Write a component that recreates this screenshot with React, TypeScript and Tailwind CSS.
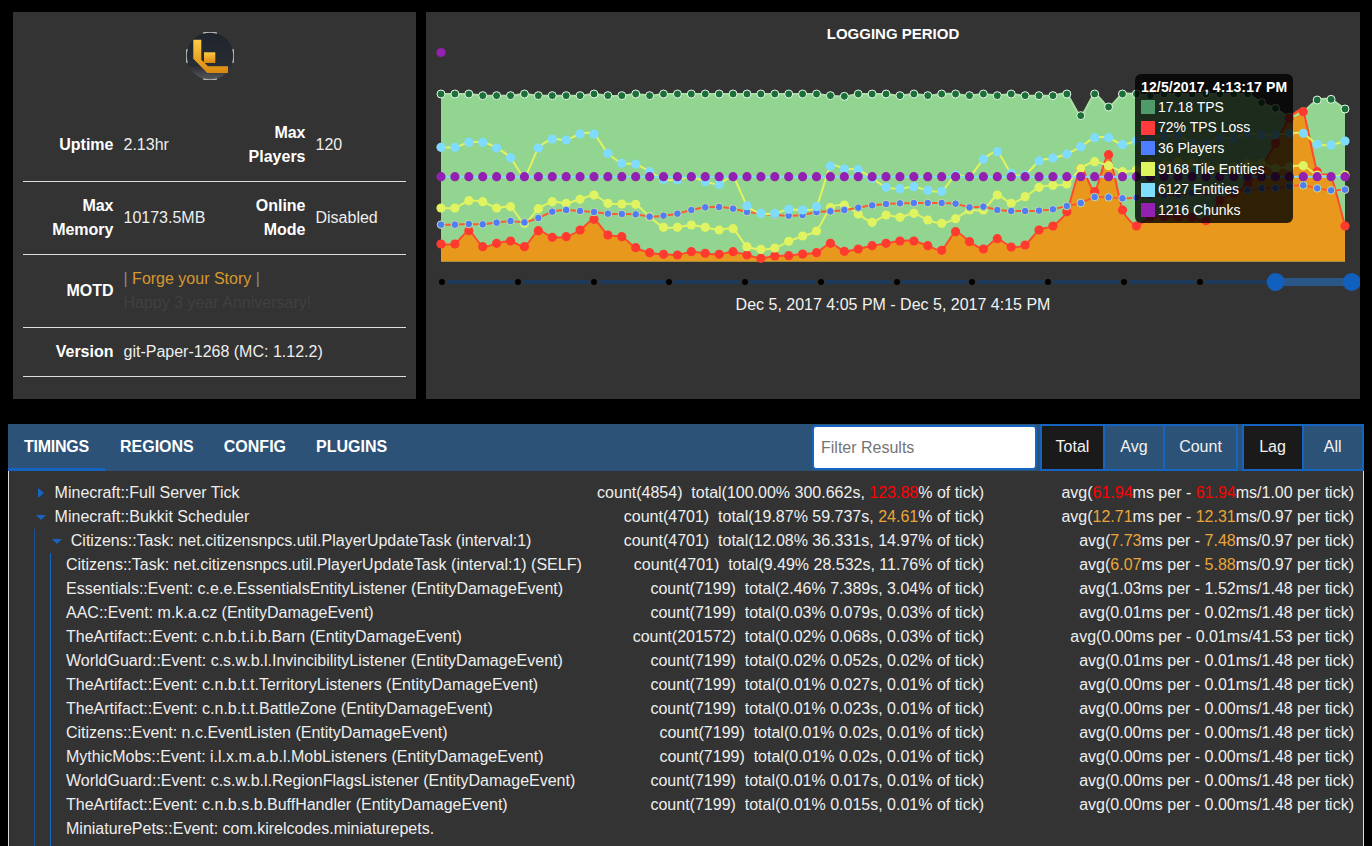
import React from "react";

const N = 66;
const xAt = (i: number) => 441 + (i * 904) / (N - 1);
const yOf = (z: number) => 20 + z / 3;

const tps = [222,222,222,227,227,227,222,227,227,227,227,222,227,227,222,227,222,222,222,222,222,222,222,222,222,222,222,222,227,229,222,222,222,227,222,227,222,222,227,222,227,222,227,227,227,222,287,222,261,222,222,227,222,222,222,222,222,222,222,248,265,292,275,240,238,267];
const loss = [672,672,632,680,670,663,680,632,652,650,630,598,645,650,683,698,703,705,695,700,703,695,705,715,708,707,702,698,670,694,687,677,670,663,663,677,691,635,665,687,656,681,675,630,618,575,445,515,404,570,618,590,590,590,592,602,540,520,495,440,370,295,275,455,470,618];
const players = [614,614,612,613,608,603,607,594,575,570,573,576,581,582,583,590,587,581,570,562,561,566,576,581,585,587,585,576,574,570,563,556,552,550,549,549,549,551,562,560,570,573,573,572,568,558,549,531,532,535,533,528,525,525,520,518,515,512,511,505,505,499,496,505,511,509];
const tiles = [564,564,542,545,564,560,610,566,545,550,538,525,550,552,553,590,622,622,615,622,630,626,680,688,684,664,648,633,563,555,582,607,585,592,580,600,610,596,570,570,525,550,530,502,496,492,445,425,437,455,450,430,435,425,430,435,445,440,430,430,445,440,437,465,470,465];
const entities = [382,382,367,367,384,413,470,384,357,360,342,342,400,430,432,455,478,480,470,485,493,470,557,580,580,568,570,560,438,447,449,475,502,506,500,511,514,465,470,418,395,460,465,423,414,402,380,353,353,374,362,350,350,345,370,372,355,355,340,344,344,340,340,373,375,363];
const chunks = Array.from({ length: N }, () => 470);

function linePath(z: number[]) {
  const p = z.map((v, i) => [xAt(i), yOf(v)]);
  const t = 0.1;
  let d = `M${p[0][0]} ${p[0][1]}`;
  for (let i = 0; i < p.length - 1; i++) {
    const a = p[Math.max(0, i - 1)];
    const b = p[i];
    const c = p[i + 1];
    const e = p[Math.min(p.length - 1, i + 2)];
    d += `C${b[0] + (c[0] - a[0]) * t} ${b[1] + (c[1] - a[1]) * t} ${c[0] - (e[0] - b[0]) * t} ${c[1] - (e[1] - b[1]) * t} ${c[0]} ${c[1]}`;
  }
  return d;
}
const areaPath = (z: number[]) => `${linePath(z)}L${xAt(N - 1)} 261.5L441 261.5Z`;

function Series({ z, line, dot, rim, r = 4.6 }: { z: number[]; line: string; dot: string; rim?: string; r?: number }) {
  return (
    <g>
      <path d={linePath(z)} fill="none" stroke={line} strokeWidth={2} />
      {z.map((v, i) => (
        <circle key={i} cx={xAt(i)} cy={yOf(v)} r={r} fill={dot} stroke={rim ?? "none"} strokeWidth={rim ? 1 : 0} />
      ))}
    </g>
  );
}

function Chart() {
  const dots = [442, 518, 594, 669, 745, 821, 897, 972, 1048, 1124, 1200];
  return (
    <svg viewBox="426 44 934 250" className="block h-[250px] w-[934px]">
      <path d={areaPath(tps)} fill="#92d590" />
      <path d={areaPath(loss)} fill="#e8991d" />
      <Series z={tps} line="#a8dfa4" dot="#1b6f38" rim="#eef7ec" r={4} />
      <Series z={loss} line="#ff4a2e" dot="#ff3b30" />
      <Series z={tiles} line="#e2f35f" dot="#e0f360" />
      <Series z={players} line="#ff5a30" dot="#4f7df5" rim="#c6dca0" r={3.8} />
      <Series z={entities} line="#e2f35f" dot="#7fdcff" />
      <Series z={chunks} line="#7fdcff" dot="#9320b0" />
      <circle cx={441} cy={52.5} r={4.6} fill="#9320b0" />
      {dots.map((x, i) => (
        <g key={x}>
          <circle cx={x} cy={282} r={3} fill="#000" />
          <rect x={x + 5} y={280} width={i === 10 ? 70 : 66} height={4} fill="#1d3a5a" />
        </g>
      ))}
      <rect x={1276} y={278} width={76} height={8} fill="#2b5688" />
      <circle cx={1275.7} cy={282} r={9} fill="#1260bd" />
      <circle cx={1351.7} cy={282} r={9} fill="#1260bd" />
    </svg>
  );
}

const legend = [
  ["#4f9a6a", "17.18 TPS"],
  ["#ff3b3b", "72% TPS Loss"],
  ["#4f7dff", "36 Players"],
  ["#dff55f", "9168 Tile Entities"],
  ["#7fdfff", "6127 Entities"],
  ["#9320b0", "1216 Chunks"],
];

function Tooltip() {
  return (
    <div className="absolute left-[709px] top-[62px] h-[149px] w-[158px] rounded-md bg-black/80 pl-[6px] pt-[3px] text-[14px] text-white">
      <div className="h-[20px] whitespace-nowrap text-[14px] font-bold leading-[20px] tracking-[0.15px]">12/5/2017, 4:13:17 PM</div>
      {legend.map(([c, t]) => (
        <div key={t} className="flex h-[20.6px] items-center gap-[3px] whitespace-nowrap">
          <span className="h-[14px] w-[14px]" style={{ backgroundColor: c }} />
          <span>{t}</span>
        </div>
      ))}
    </div>
  );
}

function Logo() {
  return (
    <svg viewBox="0 0 48 48" className="h-12 w-12">
      <defs>
        <linearGradient id="lg-bg" x1="0" y1="0" x2="0" y2="1">
          <stop offset="0" stopColor="#1f232b" />
          <stop offset="0.7" stopColor="#282c33" />
          <stop offset="1" stopColor="#55585c" />
        </linearGradient>
        <linearGradient id="lg-gold" x1="0" y1="0" x2="0" y2="1">
          <stop offset="0" stopColor="#ffcb45" />
          <stop offset="1" stopColor="#d9870f" />
        </linearGradient>
      </defs>
      <circle cx="24" cy="24" r="23.6" fill="url(#lg-bg)" />
      <path d="M17 1.2a24 24 0 0 1 14 0M17 46.8a24 24 0 0 0 14 0M1.2 17a24 24 0 0 0 0 14M46.8 17a24 24 0 0 1 0 14" fill="none" stroke="#b8b8b8" strokeWidth="1.3" />
      <path d="M7.3 7.7H15.3V27.7L22 34.3H42V41H21.3L7.3 26.7Z" fill="url(#lg-gold)" />
      <rect x="18" y="20.3" width="11.3" height="10.7" fill="url(#lg-gold)" />
    </svg>
  );
}

const lbl = "border-b border-[#ddd] px-[5.5px] py-3 text-right align-middle font-bold text-white";
const val = "border-b border-[#ddd] px-[4.5px] py-3 align-middle text-[#eee]";

function InfoPanel() {
  return (
    <section className="h-[387px] w-[403px] bg-[#333] px-[10px] pt-[20px]">
      <div className="flex h-[77px] justify-center pr-[10px]">
        <Logo />
      </div>
      <table className="w-[383px] table-fixed border-collapse text-[16px] leading-6">
        <colgroup>
          <col className="w-[96px]" />
          <col className="w-[124px]" />
          <col className="w-[68px]" />
          <col className="w-[95px]" />
        </colgroup>
        <tbody>
          <tr>
            <td className={lbl}>Uptime</td>
            <td className={val}>2.13hr</td>
            <td className={lbl}>Max Players</td>
            <td className={val}>120</td>
          </tr>
          <tr>
            <td className={lbl}>Max Memory</td>
            <td className={val}>10173.5MB</td>
            <td className={lbl}>Online Mode</td>
            <td className={val}>Disabled</td>
          </tr>
          <tr>
            <td className={lbl}>MOTD</td>
            <td className={val} colSpan={3}>
              <div className="text-[#d6992f]"><span className="text-[#8a8a8a]">|</span> Forge your Story <span className="text-[#8a8a8a]">|</span></div>
              <div className="text-[#404040]">Happy 3 year Anniversary!</div>
            </td>
          </tr>
          <tr>
            <td className={lbl}>Version</td>
            <td className={val} colSpan={3}>git-Paper-1268 (MC: 1.12.2)</td>
          </tr>
        </tbody>
      </table>
    </section>
  );
}

function ChartPanel() {
  return (
    <section className="relative h-[387px] w-[934px] bg-[#333]">
      <div className="h-[32px] pt-[14px] text-center text-[15px] font-bold leading-[16px] text-white">LOGGING PERIOD</div>
      <Chart />
      <div className="-mt-[1px] text-center text-[16px] leading-6 text-[#f2f2f2]">Dec 5, 2017 4:05 PM - Dec 5, 2017 4:15 PM</div>
      <Tooltip />
    </section>
  );
}

const R = ({ children }: { children: React.ReactNode }) => <span className="text-[#ff0000]">{children}</span>;
const O = ({ children }: { children: React.ReactNode }) => <span className="text-[#eaa53a]">{children}</span>;

function Right({ stats, avg }: { stats?: React.ReactNode; avg?: React.ReactNode }) {
  return (
    <>
      <span className="flex-1" />
      <span className="whitespace-pre text-right">{stats}</span>
      <span className="w-[370px] shrink-0 whitespace-pre text-right">{avg}</span>
    </>
  );
}

const ArrowRight = () => (
  <svg viewBox="0 0 6 10" className="h-[10px] w-[6px]"><polygon points="0,0 6,5 0,10" fill="#1565c0" /></svg>
);
const ArrowDown = () => (
  <svg viewBox="0 0 10 5" className="h-[5px] w-[10px]"><polygon points="0,0 10,0 5,5" fill="#1565c0" /></svg>
);

const rows: [string, string, string, string][] = [
  ["Essentials::Event: c.e.e.EssentialsEntityListener (EntityDamageEvent)", "count(7199)  total(2.46% 7.389s, 3.04% of tick)", "1.03", "1.52ms/1.48"],
  ["AAC::Event: m.k.a.cz (EntityDamageEvent)", "count(7199)  total(0.03% 0.079s, 0.03% of tick)", "0.01", "0.02ms/1.48"],
  ["TheArtifact::Event: c.n.b.t.i.b.Barn (EntityDamageEvent)", "count(201572)  total(0.02% 0.068s, 0.03% of tick)", "0.00", "0.01ms/41.53"],
  ["WorldGuard::Event: c.s.w.b.l.InvincibilityListener (EntityDamageEvent)", "count(7199)  total(0.02% 0.052s, 0.02% of tick)", "0.01", "0.01ms/1.48"],
  ["TheArtifact::Event: c.n.b.t.t.TerritoryListeners (EntityDamageEvent)", "count(7199)  total(0.01% 0.027s, 0.01% of tick)", "0.00", "0.01ms/1.48"],
  ["TheArtifact::Event: c.n.b.t.t.BattleZone (EntityDamageEvent)", "count(7199)  total(0.01% 0.023s, 0.01% of tick)", "0.00", "0.00ms/1.48"],
  ["Citizens::Event: n.c.EventListen (EntityDamageEvent)", "count(7199)  total(0.01% 0.02s, 0.01% of tick)", "0.00", "0.00ms/1.48"],
  ["MythicMobs::Event: i.l.x.m.a.b.l.MobListeners (EntityDamageEvent)", "count(7199)  total(0.01% 0.02s, 0.01% of tick)", "0.00", "0.00ms/1.48"],
  ["WorldGuard::Event: c.s.w.b.l.RegionFlagsListener (EntityDamageEvent)", "count(7199)  total(0.01% 0.017s, 0.01% of tick)", "0.00", "0.00ms/1.48"],
  ["TheArtifact::Event: c.n.b.s.b.BuffHandler (EntityDamageEvent)", "count(7199)  total(0.01% 0.015s, 0.01% of tick)", "0.00", "0.00ms/1.48"],
];

const rowCls = "flex h-6 items-center whitespace-nowrap pr-[9px]";

function Timings() {
  return (
    <div className="h-[375px] overflow-hidden border-x border-[#ddd] bg-[#333] pt-[10px] text-[16px] leading-6 text-[#eee]">
      <div className={rowCls}>
        <span className="flex w-[45.6px] justify-end pr-[10.6px]"><ArrowRight /></span>
        <span>Minecraft::Full Server Tick</span>
        <Right
          stats={<>count(4854)  total(100.00% 300.662s, <R>123.88</R>% of tick)</>}
          avg={<>avg(<R>61.94</R>ms per - <R>61.94</R>ms/1.00 per tick)</>}
        />
      </div>
      <div className={rowCls}>
        <span className="flex w-[45.6px] justify-end pr-[8.6px]"><ArrowDown /></span>
        <span>Minecraft::Bukkit Scheduler</span>
        <Right
          stats={<>count(4701)  total(19.87% 59.737s, <O>24.61</O>% of tick)</>}
          avg={<>avg(<O>12.71</O>ms per - <O>12.31</O>ms/0.97 per tick)</>}
        />
      </div>
      <div className="ml-[25px] border-l border-[#1b4f8f]">
        <div className={rowCls}>
          <span className="flex w-[35.8px] justify-end pr-[9px]"><ArrowDown /></span>
          <span>Citizens::Task: net.citizensnpcs.util.PlayerUpdateTask (interval:1)</span>
          <Right
            stats={<>count(4701)  total(12.08% 36.331s, 14.97% of tick)</>}
            avg={<>avg(<O>7.73</O>ms per - <O>7.48</O>ms/0.97 per tick)</>}
          />
        </div>
        <div className="ml-[15px] border-l border-[#1565c0] pl-[15px]">
          <div className={rowCls}>
            <span>Citizens::Task: net.citizensnpcs.util.PlayerUpdateTask (interval:1) (SELF)</span>
            <Right
              stats={<>count(4701)  total(9.49% 28.532s, 11.76% of tick)</>}
              avg={<>avg(<O>6.07</O>ms per - <O>5.88</O>ms/0.97 per tick)</>}
            />
          </div>
          {rows.map(([name, stats, a, b]) => (
            <div key={name} className={rowCls}>
              <span>{name}</span>
              <Right stats={stats} avg={`avg(${a}ms per - ${b} per tick)`} />
            </div>
          ))}
          <div className={rowCls}>
            <span>MiniaturePets::Event: com.kirelcodes.miniaturepets.</span>
          </div>
          <div className="h-6" />
        </div>
      </div>
    </div>
  );
}

function TabBar() {
  const tabs = ["TIMINGS", "REGIONS", "CONFIG", "PLUGINS"];
  const btn = "flex h-full items-center justify-center pb-[2px] text-[16px] text-[#f2f2f2]";
  return (
    <div className="flex h-[47px] bg-[#2c5277]">
      <nav className="flex h-full flex-1">
        {tabs.map((t, i) => (
          <div
            key={t}
            className={
              i === 0
                ? "flex h-full w-[97px] items-center justify-center border-b-[3px] border-[#1565c0] pt-[1px] text-[16px] font-bold tracking-[-0.25px] text-white"
                : "flex h-full items-center px-[15px] pb-[2px] text-[16px] font-bold text-white"
            }
          >
            {t}
          </div>
        ))}
      </nav>
      <div className="flex h-full items-stretch">
        <div className="my-px mr-[3px] flex w-[225px] items-center rounded-sm border-2 border-[#1565c0] bg-white pl-[7px] text-[16px] text-[#757575]">Filter Results</div>
        <div className="mr-[3.5px] flex h-full w-[198px] border-2 border-[#1565c0]">
          <div className={`${btn} w-[61px] bg-[#1a1a1a]`}>Total</div>
          <div className={`${btn} w-[60px] border-l-2 border-[#1565c0]`}>Avg</div>
          <div className={`${btn} flex-1 border-l-2 border-[#1565c0]`}>Count</div>
        </div>
        <div className="flex h-full w-[122.5px] border-2 border-[#1565c0]">
          <div className={`${btn} w-[58px] bg-[#1a1a1a]`}>Lag</div>
          <div className={`${btn} flex-1 border-l-2 border-[#1565c0]`}>All</div>
        </div>
      </div>
    </div>
  );
}

export default function App() {
  return (
    <div className="h-[846px] w-[1372px] overflow-hidden bg-black font-['Liberation_Sans',Arial,sans-serif]">
      <div className="flex gap-[10px] pl-[13px] pt-[12px]">
        <InfoPanel />
        <ChartPanel />
      </div>
      <div className="ml-[8px] mt-[25px] w-[1356px]">
        <TabBar />
        <Timings />
      </div>
    </div>
  );
}
